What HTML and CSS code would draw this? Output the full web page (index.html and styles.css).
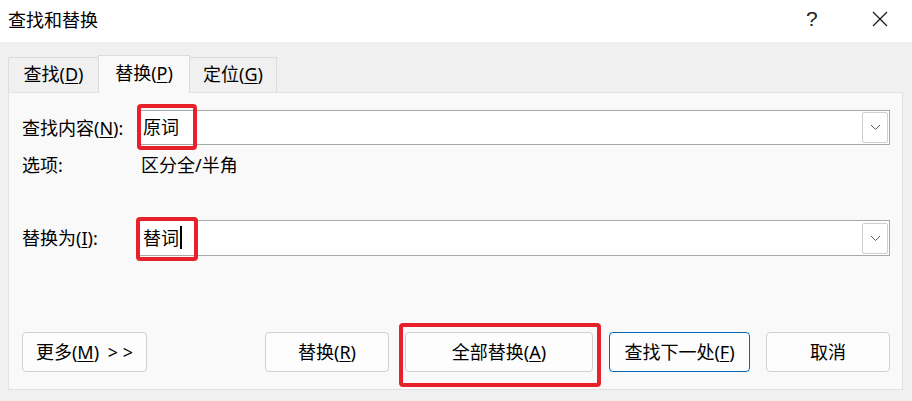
FILE: index.html
```html
<!DOCTYPE html>
<html lang="zh-CN">
<head>
<meta charset="utf-8">
<title>查找和替换</title>
<link rel="stylesheet" href="styles.css">
</head>
<body>
<div class="dialog">
  <div class="titlebar">
    <span class="title">查找和替换</span>
    <span class="help">?</span>
    <span class="close"><svg width="16" height="16" viewBox="0 0 16 16"><path d="M1 1 L15 15 M15 1 L1 15" stroke="#1a1a1a" stroke-width="1.3" fill="none"/></svg></span>
  </div>
  <div class="tabs">
    <div class="tab t1">查找(<u>D</u>)</div>
    <div class="tab t2 active">替换(<u>P</u>)</div>
    <div class="tab t3">定位(<u>G</u>)</div>
  </div>
  <div class="panel">
    <div class="row">
      <label class="label">查找内容(<u>N</u>):</label>
      <div class="combo">
        <span class="value">原词</span>
        <span class="drop"><svg width="11" height="7" viewBox="0 0 11 7"><path d="M1 1 L5.5 5.5 L10 1" stroke="#5a5a5a" stroke-width="1" fill="none"/></svg></span>
        <span class="mark mark1"></span>
      </div>
    </div>
    <div class="row options">
      <span class="label">选项:</span>
      <span class="optval">区分全/半角</span>
    </div>
    <div class="row row2">
      <label class="label">替换为(<u>I</u>):</label>
      <div class="combo">
        <span class="value">替词<span class="caret"></span></span>
        <span class="drop"><svg width="11" height="7" viewBox="0 0 11 7"><path d="M1 1 L5.5 5.5 L10 1" stroke="#5a5a5a" stroke-width="1" fill="none"/></svg></span>
        <span class="mark mark2"></span>
      </div>
    </div>
    <div class="buttons">
      <button class="btn more">更多(<u>M</u>) <span class="gt">&gt; &gt;</span></button>
      <button class="btn replace">替换(<u>R</u>)</button>
      <button class="btn all">全部替换(<u>A</u>)<span class="mark mark3"></span></button>
      <button class="btn next">查找下一处(<u>F</u>)</button>
      <button class="btn cancel">取消</button>
    </div>
  </div>
</div>
</body>
</html>
```

FILE: styles.css
```css
* { box-sizing: border-box; }
html, body {
  margin: 0;
  padding: 0;
  background: #f0f0f0;
  font-family: "Noto Sans", "Noto Sans CJK SC", sans-serif;
  font-size: 18px;
  color: #000;
}
u { text-underline-offset: 2px; text-decoration-thickness: 1px; }

.dialog { width: 912px; height: 401px; }

.titlebar {
  height: 42px;
  background: #fff;
  display: flex;
  align-items: center;
  padding-left: 8px;
  position: relative;
}
.title { font-size: 18px; line-height: 24px; margin-top: -3px; }
.help {
  position: absolute;
  left: 806px;
  top: 7px;
  font-size: 21px;
  line-height: 24px;
  color: #222;
  font-family: "Liberation Sans", sans-serif;
}
.close { position: absolute; left: 872px; top: 11px; width: 16px; height: 16px; display: block; }
.close svg { display: block; }

.tabs {
  display: flex;
  align-items: flex-end;
  height: 37px;
  margin-top: 13px;
  padding-left: 8px;
  position: relative;
  z-index: 1;
}
.tab {
  height: 35px;
  border: 1px solid #dcdcdc;
  border-bottom: none;
  background: #f0f0f0;
  display: flex;
  align-items: center;
  justify-content: center;
  line-height: 24px;
  padding-bottom: 2px;
}
.t1 { width: 90px; border-right: none; }
.t2 { width: 92px; }
.t3 { width: 87px; border-left: none; }
.tab.active {
  height: 38px;
  margin-bottom: -1px;
  background: #f9f9f9;
  padding-bottom: 4px;
}

.panel {
  margin: 0 9px 0 8px;
  height: 298px;
  background: #f9f9f9;
  border: 1px solid #e2e2e2;
  padding: 17px 12px 17px 13px;
  display: flex;
  flex-direction: column;
}

.row {
  display: grid;
  grid-template-columns: 115px 1fr;
  align-items: center;
}
.label { line-height: 24px; }
.combo {
  position: relative;
  height: 35px;
  background: #fff;
  border: 1px solid #a9a9a9;
  display: flex;
  align-items: center;
  padding-left: 5px;
}
.value { line-height: 24px; flex: 1; display: flex; align-items: center; margin-top: -1px; }
.caret { display: inline-block; width: 2px; height: 23px; background: #000; margin-left: 1px; }
.drop {
  width: 26px;
  height: 31px;
  margin-right: 1px;
  border: 1px solid #cfcfcf;
  border-radius: 2px;
  background: #fff;
  display: flex;
  align-items: center;
  justify-content: center;
}
.drop svg { display: block; }

.options { margin-top: 8px; height: 24px; }
.optval { line-height: 24px; padding-left: 4px; }
.row2 { margin-top: 43px; }
.row2 .combo { height: 36px; }

.mark {
  position: absolute;
  border: 4px solid #e8202a;
  border-radius: 4px;
  pointer-events: none;
}
.mark1 { left: -1px; top: -7px; width: 60px; height: 46px; }
.mark2 { left: -2px; top: -4px; width: 62px; height: 44px; }
.mark3 { left: -7px; top: -10px; width: 202px; height: 64px; }

.buttons {
  margin-top: auto;
  display: flex;
  gap: 16px;
}
.btn {
  position: relative;
  height: 40px;
  background: #fdfdfd;
  border: 1px solid #d0d0d0;
  border-radius: 4px;
  font-family: inherit;
  font-size: 18px;
  color: #000;
  line-height: 24px;
  padding: 0;
}
.gt { margin-left: 4px; }
.more { width: 125px; margin-right: auto; }
.replace { width: 124px; }
.all { width: 188px; }
.next { width: 141px; border-color: #0067c0; }
.cancel { width: 124px; }
```
